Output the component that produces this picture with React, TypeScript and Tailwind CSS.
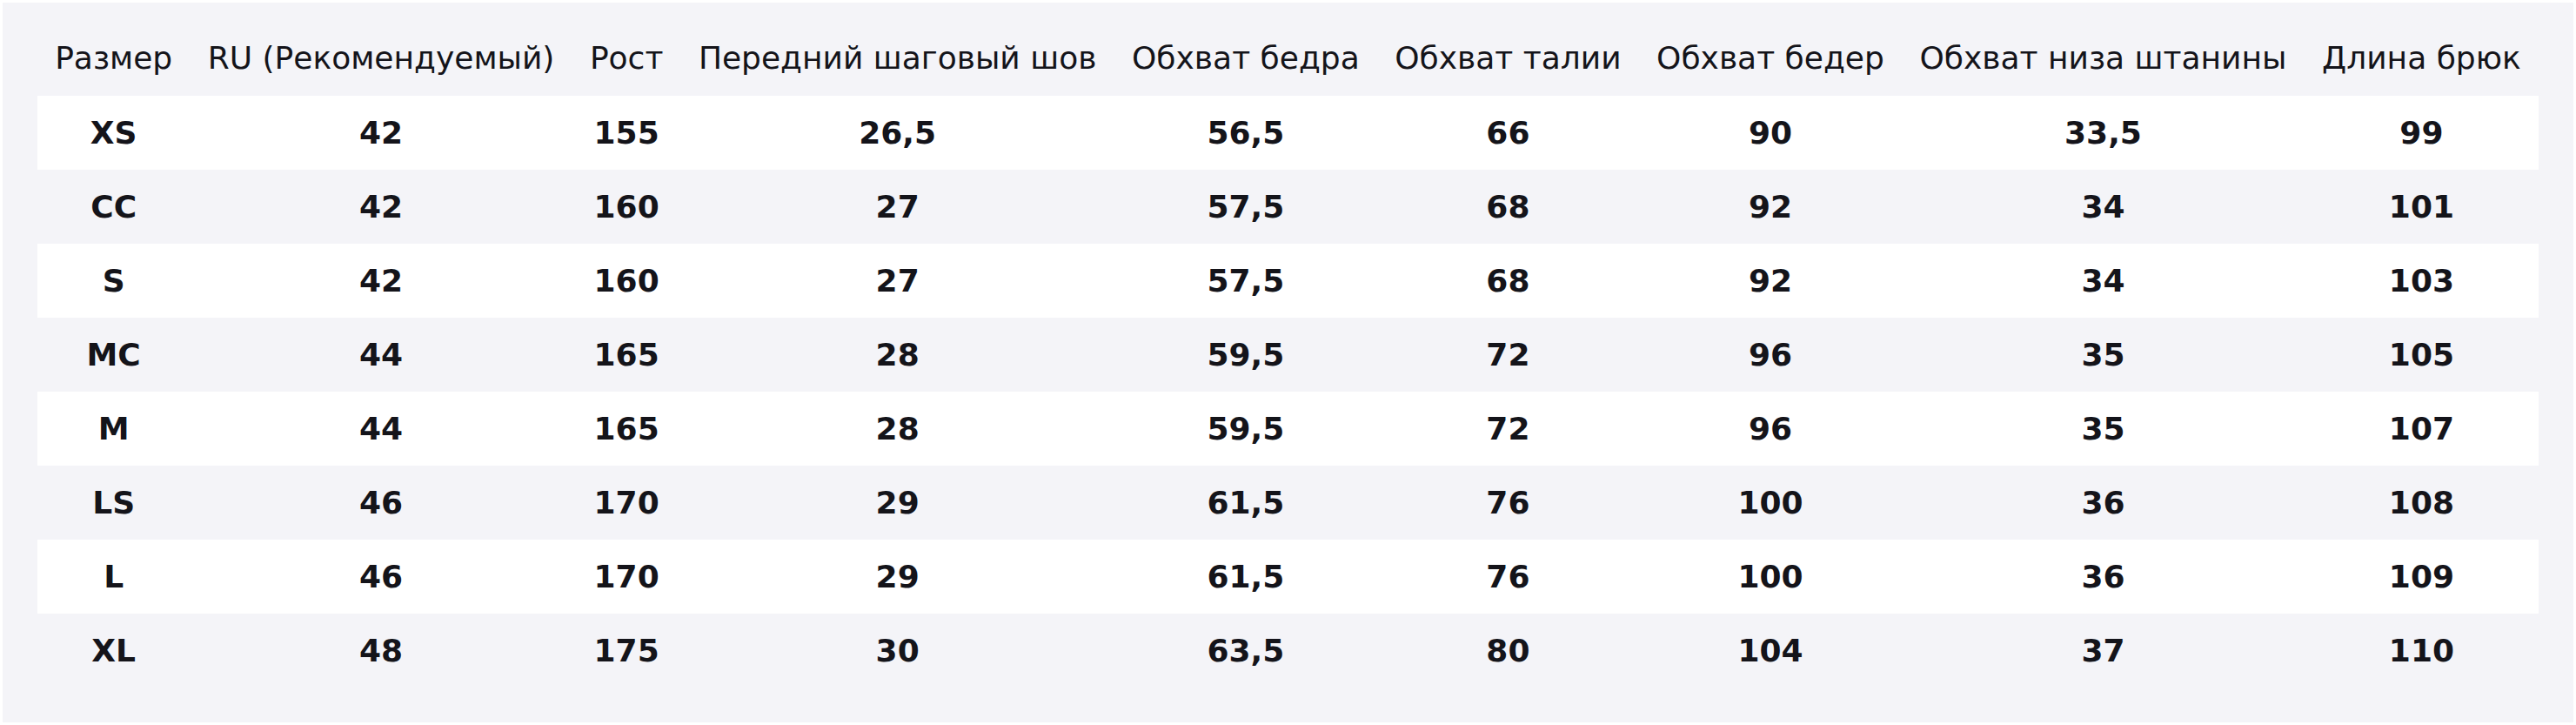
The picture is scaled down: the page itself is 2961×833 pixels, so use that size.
import React from 'react';

type Row = [string, string, string, string, string, string, string, string, string];

const HEADERS = [
  'Размер',
  'RU (Рекомендуемый)',
  'Рост',
  'Передний шаговый шов',
  'Обхват бедра',
  'Обхват талии',
  'Обхват бедер',
  'Обхват низа штанины',
  'Длина брюк',
];

const ROWS: Row[] = [
  ['XS', '42', '155', '26,5', '56,5', '66', '90', '33,5', '99'],
  ['CC', '42', '160', '27', '57,5', '68', '92', '34', '101'],
  ['S', '42', '160', '27', '57,5', '68', '92', '34', '103'],
  ['MC', '44', '165', '28', '59,5', '72', '96', '35', '105'],
  ['M', '44', '165', '28', '59,5', '72', '96', '35', '107'],
  ['LS', '46', '170', '29', '61,5', '76', '100', '36', '108'],
  ['L', '46', '170', '29', '61,5', '76', '100', '36', '109'],
  ['XL', '48', '175', '30', '63,5', '80', '104', '37', '110'],
];

export default function App() {
  return (
    <div className="min-h-[833px] bg-white p-[3px] font-['DejaVu_Sans',sans-serif] text-[#14141a]">
      <div className="bg-[#f4f4f8] p-10">
        <table className="w-full border-collapse text-[36px]">
          <thead>
            <tr>
              {HEADERS.map((h) => (
                <th
                  key={h}
                  className="px-5 pt-[3px] pb-[22px] text-center font-normal leading-[42px] whitespace-nowrap"
                >
                  {h}
                </th>
              ))}
            </tr>
          </thead>
          <tbody>
            {ROWS.map((row, i) => (
              <tr key={row[0]} className={i % 2 === 0 ? 'bg-white' : ''}>
                {row.map((cell, j) => (
                  <td
                    key={j}
                    className="h-[85px] px-5 py-0 text-center font-bold leading-[42px] whitespace-nowrap"
                  >
                    {cell}
                  </td>
                ))}
              </tr>
            ))}
          </tbody>
        </table>
      </div>
    </div>
  );
}
